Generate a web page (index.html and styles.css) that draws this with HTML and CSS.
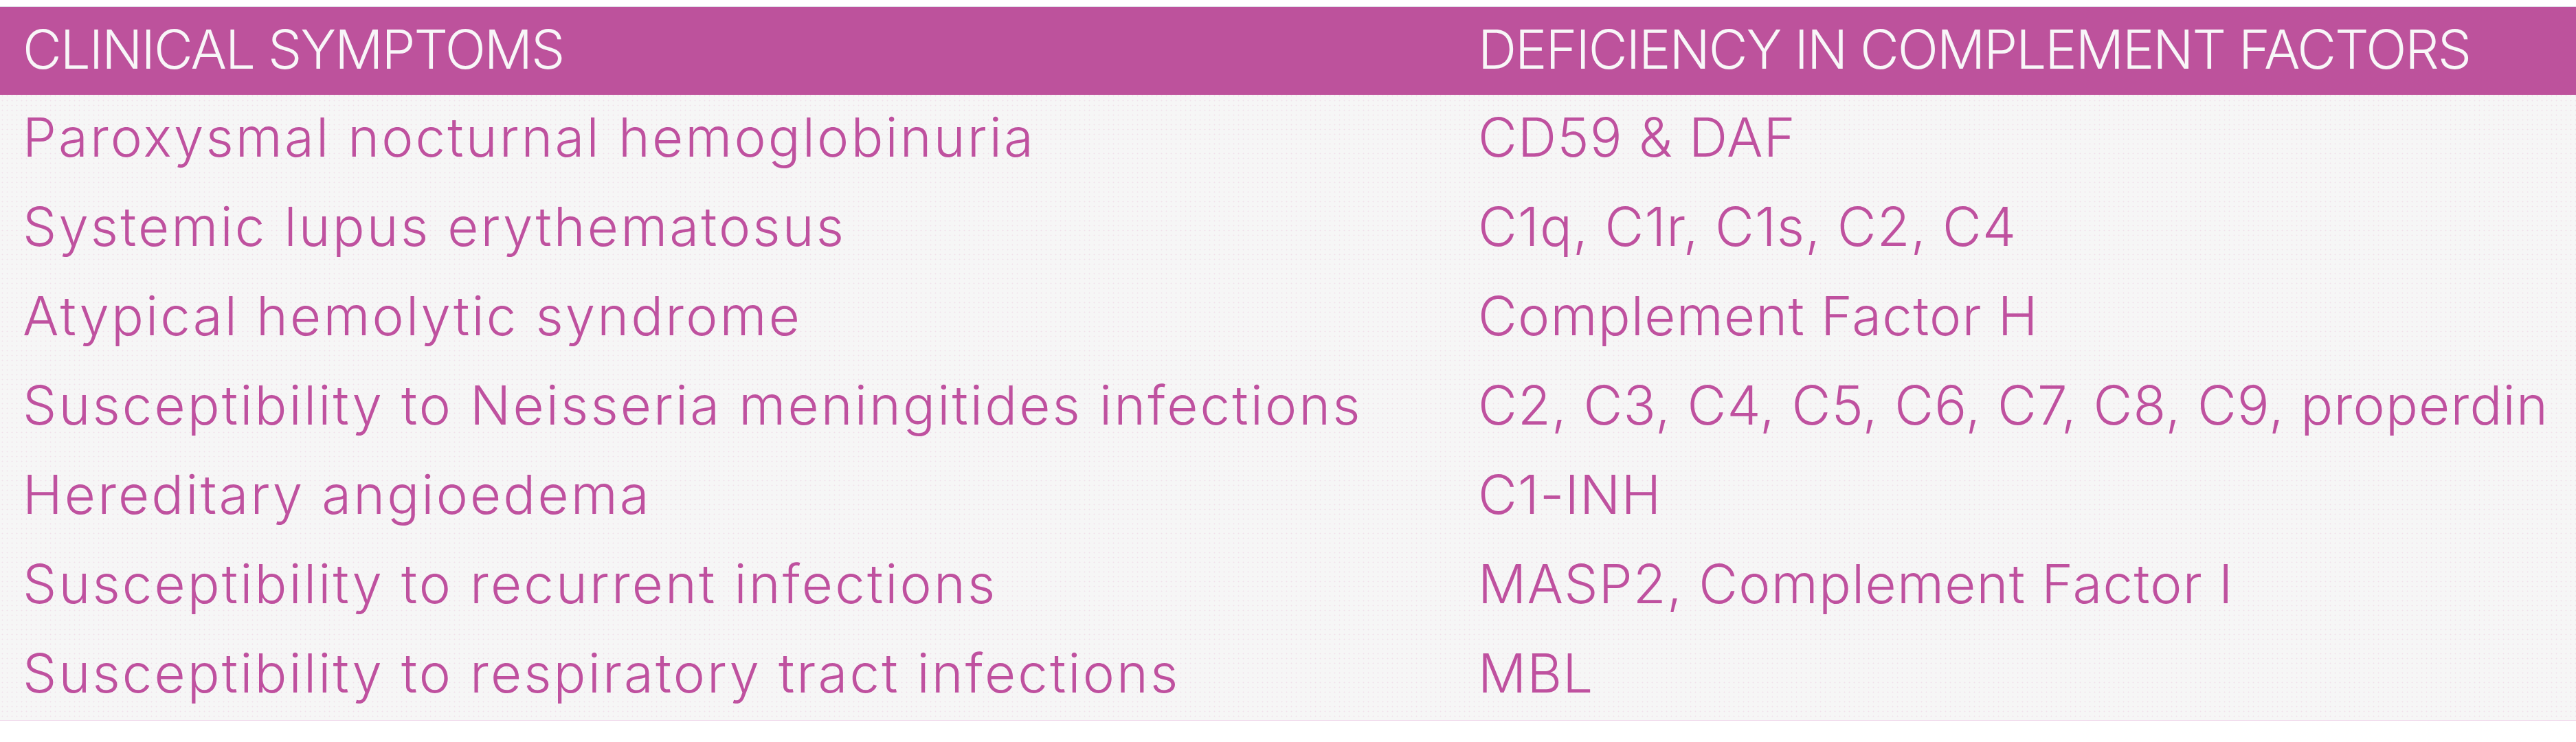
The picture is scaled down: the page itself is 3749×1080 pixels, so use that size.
FILE: index.html
```html
<!DOCTYPE html>
<html lang="en">
<head>
<meta charset="utf-8">
<title>Complement deficiencies</title>
<link rel="stylesheet" href="styles.css">
</head>
<body>
<div class="page">
  <div class="table">
    <div class="row head">
      <div class="cell">CLINICAL SYMPTOMS</div>
      <div class="cell">DEFICIENCY IN COMPLEMENT FACTORS</div>
    </div>
    <div class="row">
      <div class="cell">Paroxysmal nocturnal hemoglobinuria</div>
      <div class="cell">CD59 &amp; DAF</div>
    </div>
    <div class="row">
      <div class="cell">Systemic lupus erythematosus</div>
      <div class="cell">C1q, C1r, C1s, C2, C4</div>
    </div>
    <div class="row">
      <div class="cell">Atypical hemolytic syndrome</div>
      <div class="cell">Complement Factor H</div>
    </div>
    <div class="row">
      <div class="cell">Susceptibility to Neisseria meningitides infections</div>
      <div class="cell">C2, C3, C4, C5, C6, C7, C8, C9, properdin</div>
    </div>
    <div class="row">
      <div class="cell">Hereditary angioedema</div>
      <div class="cell">C1-INH</div>
    </div>
    <div class="row">
      <div class="cell">Susceptibility to recurrent infections</div>
      <div class="cell">MASP2, Complement Factor I</div>
    </div>
    <div class="row">
      <div class="cell">Susceptibility to respiratory tract infections</div>
      <div class="cell">MBL</div>
    </div>
  </div>
</div>
</body>
</html>
```
FILE: styles.css
```css
html, body {
  margin: 0;
  padding: 0;
  background: #ffffff;
}

.page {
  padding-top: 9px;
}

.table {
  border-top: 1px solid #e4e0ea;
  border-bottom: 1px solid #efd6ea;
  background-color: #f6f6f6;
  background-image: radial-gradient(circle, rgba(226, 160, 200, 0.25) 0.7px, transparent 1.2px);
  background-size: 7px 7px;
}

.row {
  display: grid;
  grid-template-columns: 2118px 1fr;
  height: 130px;
  box-sizing: border-box;
  padding-bottom: 6px;
}

.cell {
  padding-left: 33px;
  font-family: "Inter", "Liberation Sans", sans-serif;
  font-weight: 300;
  font-size: 78px;
  line-height: 124px;
  letter-spacing: 3.1px;
  color: #bf519f;
  white-space: nowrap;
}

.cell + .cell {
  letter-spacing: 1.2px;
}

.row.head {
  height: 128px;
  padding-bottom: 4px;
  background: #bd529c;
}

.row.head .cell {
  color: #f8f6f8;
  letter-spacing: -2px;
}
```
